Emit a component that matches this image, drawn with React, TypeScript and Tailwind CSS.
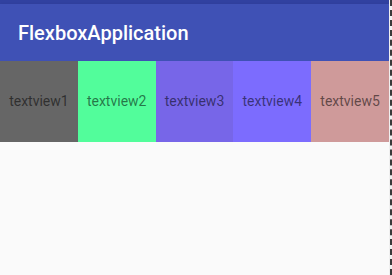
export default function App() {
  const boxes = [
    { label: "textview1", bg: "bg-[#666666]" },
    { label: "textview2", bg: "bg-[#52fd9b]" },
    { label: "textview3", bg: "bg-[#7766e8]" },
    { label: "textview4", bg: "bg-[#7c6cfe]" },
    { label: "textview5", bg: "bg-[#cf9a9a]" },
  ];

  return (
    <div className="flex w-[392px] h-[275px] bg-[#fafafa] font-['Roboto',sans-serif]">
      <div className="flex flex-col w-[389px]">
        {/* status bar */}
        <div className="h-[4px] bg-[#3141a0]" />
        {/* toolbar */}
        <div className="h-[57px] bg-[#3f51b5] flex items-center pl-[18px] shadow-sm">
          <span className="text-white text-[20px] font-medium">FlexboxApplication</span>
        </div>
        <div className="flex h-[81px]">
          {boxes.map((b) => (
            <div key={b.label} className={`flex-1 flex items-center justify-center ${b.bg}`}>
              <span className="text-[14px] text-black/55">{b.label}</span>
            </div>
          ))}
        </div>
      </div>
      <div className="w-[3px] border-r-2 border-dashed border-[#3a3a3a] bg-[#f0f0f0]" />
    </div>
  );
}
